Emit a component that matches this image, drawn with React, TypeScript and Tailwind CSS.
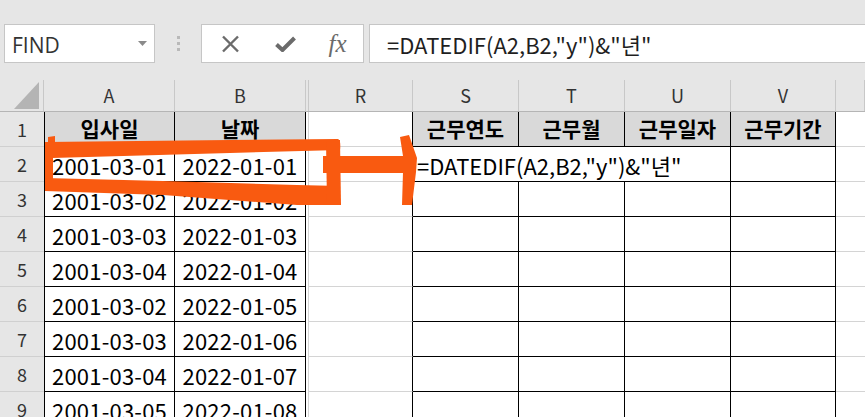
import React from "react";

const cols = ["A", "B", "", "R", "S", "T", "U", "V", ""];
const aVals = ["2001-03-01", "2001-03-02", "2001-03-03", "2001-03-04", "2001-03-02", "2001-03-03", "2001-03-04", "2001-03-05"];
const bVals = ["2022-01-01", "2022-01-02", "2022-01-03", "2022-01-04", "2022-01-05", "2022-01-06", "2022-01-07", "2022-01-08"];
const heads = ["근무연도", "근무월", "근무일자", "근무기간"];
const FORMULA = '=DATEDIF(A2,B2,"y")&"년"';

const font = "font-['Noto_Sans_CJK_KR','Noto_Sans',sans-serif]";

function Toolbar() {
  return (
    <div className="h-[80px] bg-[#e6e6e6] flex items-start pt-[24px]">
      <div className="ml-[4px] w-[151px] h-[39px] bg-white border border-[#c6c6c6] flex items-center justify-between pl-[7px] pr-[7px]">
        <span className="text-[21px] text-[#333333] font-['Open_Sans','Noto_Sans',sans-serif] leading-none mt-[3px]">FIND</span>
        <svg width="9" height="5" viewBox="0 0 9 5"><path d="M0 0 L9 0 L4.5 5 Z" fill="#8a8a8a" /></svg>
      </div>
      <div className="w-[46px] h-[39px] flex flex-col items-center justify-center gap-[3px]">
        <div className="w-[3px] h-[3px] bg-[#b9b9b9]" />
        <div className="w-[3px] h-[3px] bg-[#b9b9b9]" />
        <div className="w-[3px] h-[3px] bg-[#b9b9b9]" />
      </div>
      <div className="w-[163px] h-[39px] bg-white border border-[#c6c6c6] flex items-center">
        <div className="w-[55px] flex justify-center pl-[2px]">
          <svg width="19" height="18" viewBox="0 0 19 18"><path d="M2 1.5 L17 16.5 M17 1.5 L2 16.5" stroke="#6b6b6b" strokeWidth="2.4" /></svg>
        </div>
        <div className="w-[55px] flex justify-center pl-[2px]">
          <svg width="21" height="16" viewBox="0 0 21 16"><path d="M1.5 8.5 L7.5 14 L19.5 2" stroke="#6b6b6b" strokeWidth="4" fill="none" strokeLinejoin="miter" /></svg>
        </div>
        <div className="w-[51px] flex justify-center">
          <span className="italic font-['Liberation_Serif',serif] text-[25px] text-[#6b6b6b] leading-none">fx</span>
        </div>
      </div>
      <div className="ml-[5px] flex-1 h-[39px] bg-white border border-r-0 border-[#c6c6c6] flex items-center pl-[17px]">
        <span className={`${font} text-[22px] text-[#1f1f1f] leading-none`}>{FORMULA}</span>
      </div>
    </div>
  );
}

export default function App() {
  const grid = "grid grid-cols-[44px_131px_131px_3px_104px_106px_106px_106px_105px_1fr]";
  const dataCell = `h-[35px] border-r border-b border-black flex items-center justify-center pt-[2px] ${font} text-[22px] tracking-[0.2px] text-black bg-white`;
  const headCell = `h-[35px] border-r border-b border-black flex items-center justify-center ${font} font-bold text-[21px] text-black bg-[#d9d9d9]`;
  const rowHead = `h-[35px] bg-[#e6e6e6] border-b border-[#d0d0d0] flex items-center justify-center ${font} text-[18px] text-[#333333]`;
  const plain = "h-[35px] bg-white border-b border-[#d4d4d4]";

  const rows = [] as React.ReactNode[];
  for (let r = 1; r <= 9; r++) {
    const i = r - 2;
    rows.push(<div key={`h${r}`} className={rowHead}>{r}</div>);
    if (r === 1) {
      rows.push(<div key={`a${r}`} className={`${headCell} border-l`}>입사일</div>);
      rows.push(<div key={`b${r}`} className={headCell}>날짜</div>);
    } else {
      rows.push(<div key={`a${r}`} className={`${dataCell} border-l`}>{aVals[i]}</div>);
      rows.push(<div key={`b${r}`} className={dataCell}>{bVals[i]}</div>);
    }
    rows.push(<div key={`g${r}`} className="h-[35px] bg-white border-r border-[#d4d4d4]" />);
    rows.push(<div key={`r${r}`} className={`${plain} border-r border-r-black`} />);
    if (r === 1) {
      heads.forEach((h, k) => rows.push(<div key={`s${r}${k}`} className={headCell}>{h}</div>));
    } else if (r === 2) {
      rows.push(
        <div key={`s${r}`} className={`col-span-3 h-[35px] border-r border-b border-black bg-white flex items-center pl-[4px] pt-[2px] ${font} text-[22px] text-black whitespace-nowrap`}>
          {FORMULA}
        </div>
      );
      rows.push(<div key={`v${r}`} className={dataCell} />);
    } else {
      for (let k = 0; k < 4; k++) rows.push(<div key={`s${r}${k}`} className={dataCell} />);
    }
    rows.push(<div key={`w${r}`} className={plain} />);
  }

  const orange = "#f95a10";

  return (
    <div className="relative w-[865px] h-[417px] overflow-hidden bg-white">
      <Toolbar />
      <div className={`${grid} h-[32px] bg-[#e6e6e6] border-b border-[#b5b5b5]`}>
        <div className="flex items-end justify-end pr-[3px] pb-[2px] border-r border-[#c8c8c8]">
          <svg width="26" height="27" viewBox="0 0 26 27"><path d="M25 0 L25 27 L0 27 Z" fill="#b4b4b4" /></svg>
        </div>
        {cols.map((c, k) => (
          <div key={k} className={`flex items-center justify-center border-r border-[#c8c8c8] ${font} text-[18px] text-[#333333]`}>
            {c}
          </div>
        ))}
      </div>
      <div className={grid}>{rows}</div>
      <svg className="absolute left-0 top-0 pointer-events-none" width="865" height="417" viewBox="0 0 865 417">
        <path d="M48 137 L55 136 L55 146 L48 146 Z" fill={orange} />
        <path d="M45 142 L230 140 L338 139 Q341 140 340 150 L230 153 L52 158 L45 158 Z" fill={orange} />
        <path d="M45 142 L53 142 L53 191 L45 191 Z" fill={orange} />
        <path d="M45 178 L163 181 L297 185 L340 186 L340 205 L297 205 L163 195 L45 191 Z" fill={orange} />
        <path d="M326 140 L340 140 L341 205 L327 205 Z" fill={orange} />
        <path d="M323 156 L405 156 L405 173 L323 173 Z" fill={orange} />
        <path d="M400 137 L409 135 L417 158 L416 172 L412 205 L402 205 L403 172 L403 156 Z" fill={orange} />
      </svg>
    </div>
  );
}
